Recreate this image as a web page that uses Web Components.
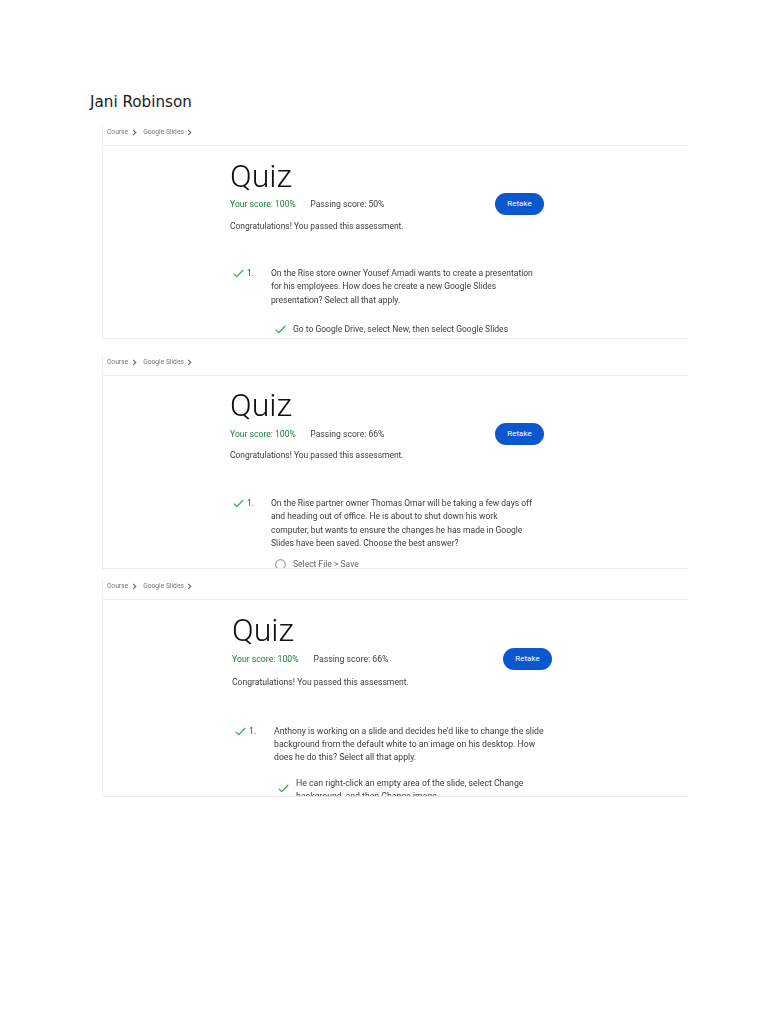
<!DOCTYPE html>
<html lang="en"><head><meta charset="utf-8"><title>Jani Robinson</title>
<style>
html,body{margin:0;background:#fff}
body{font-family:"Liberation Sans",sans-serif}
</style></head>
<body>
<doc-page>
  <span slot="author">Jani Robinson</span>
  <quiz-shot style="--h:214px;--bar:21px;--pl:127px;--title-top:10px;--sc-gap:2px;--pass-gap:14.5px;--sc-fs:8.6px;--btn-left:265px;--pg:10px;--cg-fs:8.45px;--q-top:35px;--q-left:41px;--fs:8.53px;--lh:13.4px;--opt-gap:16px;--opt-left:45px;--ic-up:0px" score="100%" passing="50%">
    <quiz-question num="1.">On the Rise store owner Yousef Amadi wants to create a presentation<br>for his employees. How does he create a new Google Slides<br>presentation? Select all that apply.
      <quiz-option slot="option" kind="check">Go to Google Drive, select New, then select Google Slides</quiz-option>
    </quiz-question>
  </quiz-shot>
  <quiz-shot style="margin-top:15px;--h:214px;--bar:21px;--pl:127px;--title-top:9px;--sc-gap:3px;--pass-gap:14.5px;--sc-fs:8.6px;--btn-left:265px;--pg:9px;--cg-fs:8.45px;--q-top:36px;--q-left:41px;--fs:8.53px;--lh:13.4px;--opt-gap:7px;--opt-left:45px;--ic-up:0px" score="100%" passing="66%">
    <quiz-question num="1.">On the Rise partner owner Thomas Omar will be taking a few days off<br>and heading out of office. He is about to shut down his work<br>computer, but wants to ensure the changes he has made in Google<br>Slides have been saved. Choose the best answer?
      <quiz-option slot="option" kind="radio" style="color:#666">Select File &gt; Save</quiz-option>
    </quiz-question>
  </quiz-shot>
  <quiz-shot style="margin-top:9px;--h:218px;--bar:21px;--pl:129px;--title-top:10px;--sc-gap:3px;--pass-gap:15px;--sc-fs:8.7px;--btn-left:271px;--pg:11px;--cg-fs:8.6px;--q-top:37px;--q-left:42px;--fs:8.7px;--lh:13.2px;--opt-gap:12px;--opt-left:46px;--ic-up:2px" score="100%" passing="66%">
    <quiz-question num="1.">Anthony is working on a slide and decides he'd like to change the slide<br>background from the default white to an image on his desktop. How<br>does he do this? Select all that apply.
      <quiz-option slot="option" kind="check">He can right-click an empty area of the slide, select Change<br>background, and then Change image</quiz-option>
    </quiz-question>
  </quiz-shot>
</doc-page>
<script>
const el=(html)=>{const t=document.createElement('template');t.innerHTML=html;return t;};
const CHECK='<svg viewBox="0 0 11 9" width="11" height="9" aria-hidden="true"><path d="M.8 4.6 3.8 7.6 10.2 1" fill="none" stroke="#34a853" stroke-width="1.2"/></svg>';
const CHEV='<svg viewBox="0 0 5 7" width="5" height="7" aria-hidden="true"><path d="M1 .8 3.8 3.5 1 6.2" fill="none" stroke="#666" stroke-width="1.1"/></svg>';

class DocPage extends HTMLElement{
  constructor(){super();this.attachShadow({mode:'open'}).appendChild(DocPage.t.content.cloneNode(true));}
}
DocPage.t=el(`<style>
:host{display:block;padding:93px 80px 0 90px;height:931px;box-sizing:content-box}
.author{font:15.2px/18px "DejaVu Sans",sans-serif;color:#1a1a1a;height:31px}
.stack{display:flex;flex-direction:column;margin-left:12px}
</style><div class="author"><slot name="author"></slot></div><div class="stack"><slot></slot></div>`);
customElements.define('doc-page',DocPage);

class QuizShot extends HTMLElement{
  constructor(){super();const s=this.attachShadow({mode:'open'});s.appendChild(QuizShot.t.content.cloneNode(true));
    s.querySelector('.passing').textContent='Passing score: '+this.getAttribute('passing');
    s.querySelector('.score').textContent='Your score: '+this.getAttribute('score');
    s.querySelectorAll('.chev').forEach(c=>c.innerHTML=CHEV);
  }
}
QuizShot.t=el(`<style>
:host{display:block;height:var(--h);overflow:hidden;border-left:1px solid #f0f0f0;border-bottom:1px solid #ebebeb;box-sizing:content-box;font-family:Roboto,sans-serif;color:#3c3c3c;background:#fff}
.inner{filter:blur(.35px)}
.crumbs{height:var(--bar);box-sizing:content-box;border-bottom:1px solid #ececec;display:flex;align-items:flex-start;gap:3.5px;padding-left:4px;font-size:6.7px;line-height:16px;color:#777}
.chev{display:inline-flex;height:16px;align-items:center}
.crumbs .sec{margin-left:3px}
main{padding-left:var(--pl);width:calc(var(--pl) + 330px)}
h1{margin:var(--title-top) 0 0;font:300 32px/40px Roboto,sans-serif;color:#111;height:40px}
.scores{position:relative;display:flex;gap:var(--pass-gap);font-size:var(--sc-fs);line-height:12px;margin-top:var(--sc-gap);height:12px}
.score{color:#188038}
.btn{position:absolute;left:var(--btn-left);top:-5px;width:49px;height:22px;border-radius:11px;background:#0b57d0;color:#fff;font-size:8px;line-height:22px;text-align:center}
.congrats{font-size:var(--cg-fs);line-height:12px;margin-top:var(--pg);color:#3c3c3c}
</style><div class="inner">
<div class="crumbs"><span>Course</span><span class="chev"></span><span class="sec">Google Slides</span><span class="chev"></span></div>
<main><h1>Quiz</h1>
<div class="scores"><span class="score"></span><span class="passing"></span><span class="btn">Retake</span></div>
<div class="congrats">Congratulations! You passed this assessment.</div>
<slot></slot></main></div>`);
customElements.define('quiz-shot',QuizShot);

class QuizQuestion extends HTMLElement{
  constructor(){super();const s=this.attachShadow({mode:'open'});s.appendChild(QuizQuestion.t.content.cloneNode(true));
    s.querySelector('.mark').innerHTML=CHECK;s.querySelector('.num').textContent=this.getAttribute('num');}
}
QuizQuestion.t=el(`<style>
:host{display:block;margin-top:var(--q-top);font-size:var(--fs);line-height:var(--lh);color:#3c3c3c}
.row{display:flex;align-items:flex-start}
.lead{flex:none;width:var(--q-left);display:flex;align-items:center;gap:3px;height:var(--lh);padding-left:3px;box-sizing:border-box}
.mark{display:inline-flex;margin-top:-1px}
.opts{margin-top:var(--opt-gap);padding-left:var(--opt-left)}
</style><div class="row"><div class="lead"><span class="mark"></span><span class="num"></span></div><div><slot></slot></div></div>
<div class="opts"><slot name="option"></slot></div>`);
customElements.define('quiz-question',QuizQuestion);

class QuizOption extends HTMLElement{
  constructor(){super();const s=this.attachShadow({mode:'open'});s.appendChild(QuizOption.t.content.cloneNode(true));
    const k=this.getAttribute('kind');
    s.querySelector('.ic').innerHTML=k==='check'?CHECK:'<svg viewBox="0 0 11 11" width="11" height="11" aria-hidden="true"><circle cx="5.5" cy="5.5" r="4.8" fill="none" stroke="#777" stroke-width=".9"/></svg>';}
}
QuizOption.t=el(`<style>
:host{display:flex;align-items:center;gap:7px;font-size:var(--fs);line-height:var(--lh)}
.ic{display:inline-flex;flex:none;margin-top:calc(var(--ic-up) * -1)}
</style><span class="ic"></span><span><slot></slot></span>`);
customElements.define('quiz-option',QuizOption);
</script>
</body></html>
